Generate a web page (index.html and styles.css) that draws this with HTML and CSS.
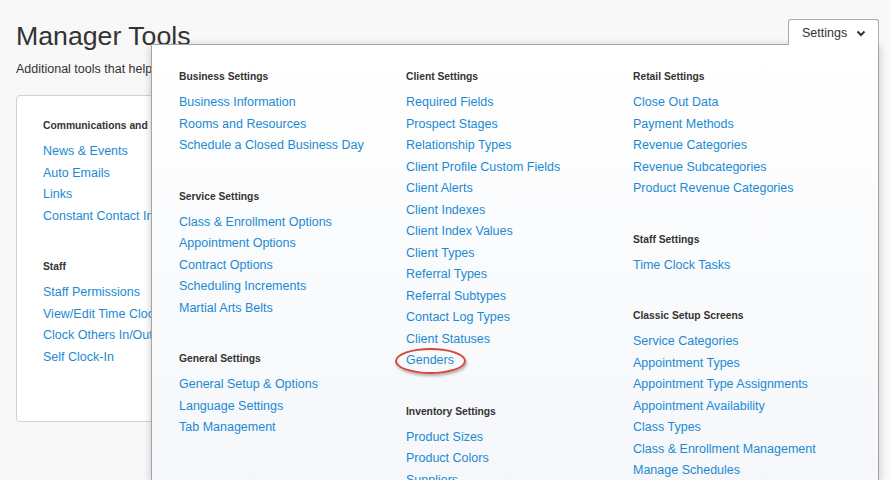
FILE: index.html
```html
<!DOCTYPE html>
<html lang="en">
<head>
    <meta charset="UTF-8">
    <meta name="viewport" content="width=device-width, initial-scale=1.0">
    <title>Manager Tools</title>
    <link rel="stylesheet" href="styles.css">
</head>
<body>
    <div class="page">
        <div class="header">
            <div class="title-block">
                <h1>Manager Tools</h1>
                <p class="subtitle">Additional tools that help you manage your business</p>
            </div>

            <div class="settings">
                <button class="settings-btn">Settings
                    <svg class="chevron" width="10" height="7" viewBox="0 0 10 7"><polyline points="1.5,1.5 5,5 8.5,1.5" fill="none" stroke="#333" stroke-width="2"/></svg>
                </button>

                <div class="settings-menu">
                    <div class="menu-col">
                        <div class="group">
                            <h3>Business Settings</h3>
                            <a href="#">Business Information</a>
                            <a href="#">Rooms and Resources</a>
                            <a href="#">Schedule a Closed Business Day</a>
                        </div>
                        <div class="group">
                            <h3>Service Settings</h3>
                            <a href="#">Class &amp; Enrollment Options</a>
                            <a href="#">Appointment Options</a>
                            <a href="#">Contract Options</a>
                            <a href="#">Scheduling Increments</a>
                            <a href="#">Martial Arts Belts</a>
                        </div>
                        <div class="group">
                            <h3>General Settings</h3>
                            <a href="#">General Setup &amp; Options</a>
                            <a href="#">Language Settings</a>
                            <a href="#">Tab Management</a>
                        </div>
                    </div>

                    <div class="menu-col">
                        <div class="group">
                            <h3>Client Settings</h3>
                            <a href="#">Required Fields</a>
                            <a href="#">Prospect Stages</a>
                            <a href="#">Relationship Types</a>
                            <a href="#">Client Profile Custom Fields</a>
                            <a href="#">Client Alerts</a>
                            <a href="#">Client Indexes</a>
                            <a href="#">Client Index Values</a>
                            <a href="#">Client Types</a>
                            <a href="#">Referral Types</a>
                            <a href="#">Referral Subtypes</a>
                            <a href="#">Contact Log Types</a>
                            <a href="#">Client Statuses</a>
                            <a href="#"><span class="circled">Genders</span></a>
                        </div>
                        <div class="group">
                            <h3>Inventory Settings</h3>
                            <a href="#">Product Sizes</a>
                            <a href="#">Product Colors</a>
                            <a href="#">Suppliers</a>
                        </div>
                    </div>

                    <div class="menu-col">
                        <div class="group">
                            <h3>Retail Settings</h3>
                            <a href="#">Close Out Data</a>
                            <a href="#">Payment Methods</a>
                            <a href="#">Revenue Categories</a>
                            <a href="#">Revenue Subcategories</a>
                            <a href="#">Product Revenue Categories</a>
                        </div>
                        <div class="group">
                            <h3>Staff Settings</h3>
                            <a href="#">Time Clock Tasks</a>
                        </div>
                        <div class="group">
                            <h3>Classic Setup Screens</h3>
                            <a href="#">Service Categories</a>
                            <a href="#">Appointment Types</a>
                            <a href="#">Appointment Type Assignments</a>
                            <a href="#">Appointment Availability</a>
                            <a href="#">Class Types</a>
                            <a href="#">Class &amp; Enrollment Management</a>
                            <a href="#">Manage Schedules</a>
                        </div>
                    </div>
                </div>
            </div>
        </div>

        <div class="card">
            <div class="group">
                <h3>Communications and Marketing</h3>
                <a href="#">News &amp; Events</a>
                <a href="#">Auto Emails</a>
                <a href="#">Links</a>
                <a href="#">Constant Contact Integration</a>
            </div>
            <div class="group">
                <h3>Staff</h3>
                <a href="#">Staff Permissions</a>
                <a href="#">View/Edit Time Clock</a>
                <a href="#">Clock Others In/Out</a>
                <a href="#">Self Clock-In</a>
            </div>
        </div>
    </div>
</body>
</html>
```

FILE: styles.css
```css
html, body {
    height: 480px;
    overflow: hidden;
}

body {
    font-family: "Liberation Sans", Arial, sans-serif;
    background-color: #f8f8f8;
    color: #333;
    margin: 0;
    padding: 0;
}

.page {
    box-sizing: border-box;
    height: 480px;
    padding: 19px 11px 0 16px;
}

.header {
    display: flex;
    justify-content: space-between;
    align-items: flex-start;
}

h1 {
    font-size: 26.7px;
    font-weight: normal;
    line-height: 30px;
    margin: 2px 0 0 0;
    color: #333;
}

.subtitle {
    font-size: 12.5px;
    line-height: 16px;
    margin: 10px 0 0 0;
}

.settings {
    position: relative;
}

.settings-btn {
    position: relative;
    z-index: 3;
    display: flex;
    align-items: center;
    gap: 9px;
    width: 91px;
    height: 26px;
    padding: 0 0 0 13px;
    font-family: "Liberation Sans", Arial, sans-serif;
    font-size: 12.5px;
    color: #333;
    background-color: #fff;
    border: 1px solid #aaa;
    border-bottom: none;
    border-radius: 3px 3px 0 0;
    cursor: pointer;
}

.chevron {
    margin-top: 1px;
}

/* the dropdown runs past the bottom of the window, so it is cut at 480px */
.settings-menu {
    position: absolute;
    z-index: 2;
    top: 25px;
    right: 0;
    width: 699px;
    height: 410px;
    padding: 25px 0 0 27px;
    display: grid;
    grid-template-columns: 227px 227px 1fr;
    overflow: hidden;
    background: linear-gradient(#fff, #f5f7fa);
    border: 1px solid #a4a4a4;
    border-bottom: none;
    box-shadow: 0 2px 8px rgba(0, 0, 0, 0.22);
}

.group + .group {
    margin-top: 33px;
}

h3 {
    font-size: 10.3px;
    font-weight: bold;
    line-height: 14px;
    margin: 0 0 8px 0;
    color: #333;
    white-space: nowrap;
}

.group a {
    display: block;
    font-size: 12.5px;
    line-height: 21.5px;
    color: #1b8ad3;
    text-decoration: none;
    white-space: nowrap;
}

.circled {
    position: relative;
    display: inline-block;
}

.circled::after {
    content: "";
    position: absolute;
    left: -11px;
    top: -2px;
    width: 67px;
    height: 22px;
    border: 2.5px solid #d9453a;
    border-radius: 50%;
    box-shadow: 1px 2px 3px rgba(0, 0, 0, 0.3);
}

.card {
    margin-top: 18px;
    background-color: #fff;
    border: 1px solid #d2d2d2;
    border-radius: 4px;
    padding: 23px 26px 53px 26px;
}
```
